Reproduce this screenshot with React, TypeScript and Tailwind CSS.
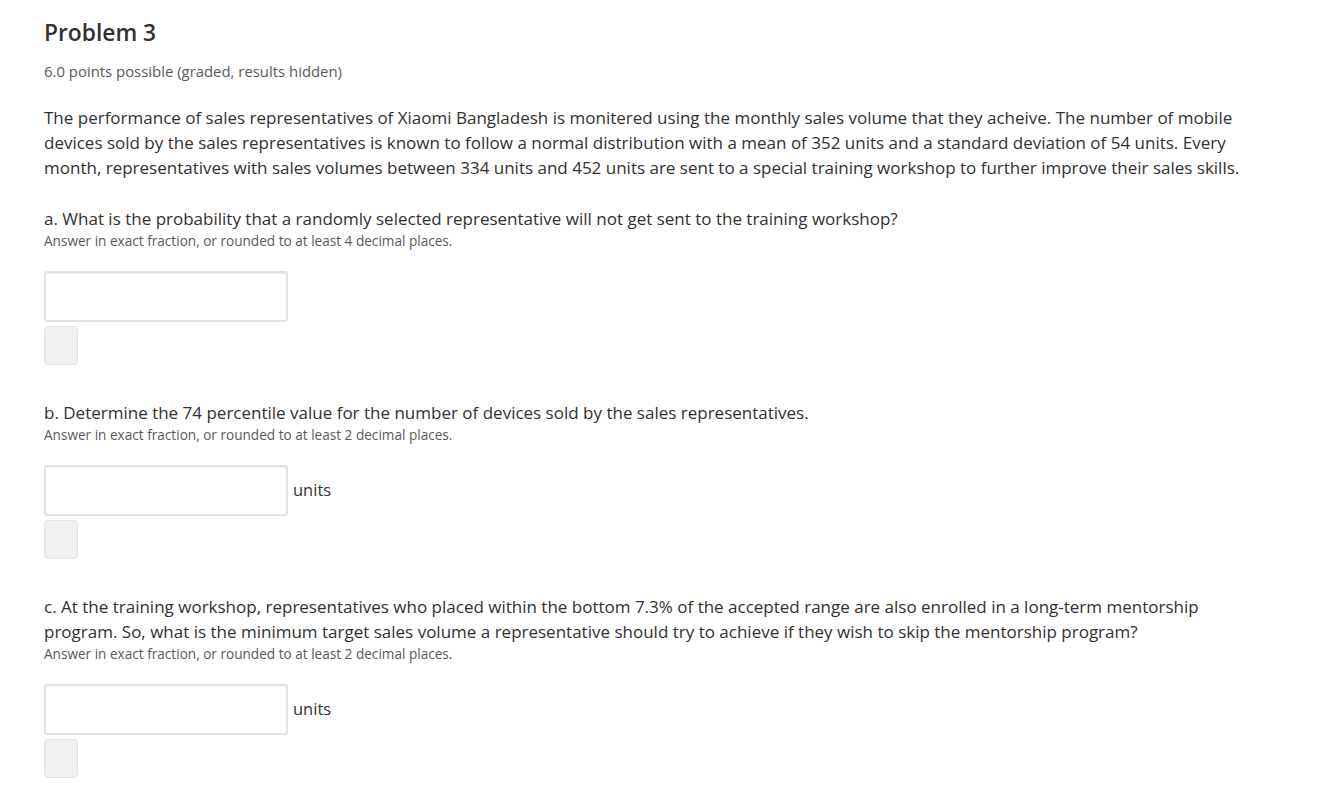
const font = { fontFamily: '"Open Sans", "Noto Sans", sans-serif' };

function AnswerInput({ unit }: { unit?: string }) {
  return (
    <div className="mt-[20px]">
      <div className="flex items-center">
        <input
          type="text"
          className="w-[244px] h-[51px] bg-white border-2 border-[#e2e2e2] rounded-[3px] shadow-[inset_0_1px_2px_rgba(0,0,0,0.06)] outline-none"
        />
        {unit && <span className="ml-[5px] text-[16.5px] text-[#333]">{unit}</span>}
      </div>
      <button className="mt-[4px] w-[34px] h-[39px] bg-[#f0f0f0] border border-[#e3e3e3] rounded-[4px]" />
    </div>
  );
}

export default function App() {
  return (
    <div className="min-h-screen bg-white text-[#313131]" style={font}>
      <div className="pl-[44px] pt-[18px] pr-[40px]">
        <h2 className="text-[22.8px] font-semibold leading-[30px] text-[#313131]">Problem 3</h2>
        <div className="mt-[13px] text-[14.9px] leading-[20px] text-[#5a5a5a]">6.0 points possible (graded, results hidden)</div>

        <p className="mt-[24px] text-[17px] leading-[25px] w-[1240px]">
          The performance of sales representatives of Xiaomi Bangladesh is monitered using the monthly sales volume that they acheive. The number of mobile
          <br />
          devices sold by the sales representatives is known to follow a normal distribution with a mean of 352 units and a standard deviation of 54 units. Every
          <br />
          month, representatives with sales volumes between 334 units and 452 units are sent to a special training workshop to further improve their sales skills.
        </p>

        <div className="mt-[26px]">
          <p className="text-[17px] leading-[25px]">a. What is the probability that a randomly selected representative will not get sent to the training workshop?</p>
          <p className="text-[13.6px] leading-[20px] text-[#5a5a5a]">Answer in exact fraction, or rounded to at least 4 decimal places.</p>
          <AnswerInput />
        </div>

        <div className="mt-[30px]">
          <p className="text-[17px] leading-[25px]">b. Determine the 74 percentile value for the number of devices sold by the sales representatives.</p>
          <p className="text-[13.6px] leading-[20px] text-[#5a5a5a]">Answer in exact fraction, or rounded to at least 2 decimal places.</p>
          <AnswerInput unit="units" />
        </div>

        <div className="mt-[30px]">
          <p className="text-[17px] leading-[25px]">
            c. At the training workshop, representatives who placed within the bottom 7.3% of the accepted range are also enrolled in a long-term mentorship
            <br />
            program. So, what is the minimum target sales volume a representative should try to achieve if they wish to skip the mentorship program?
          </p>
          <p className="text-[13.6px] leading-[20px] text-[#5a5a5a]">Answer in exact fraction, or rounded to at least 2 decimal places.</p>
          <AnswerInput unit="units" />
        </div>
      </div>
    </div>
  );
}
